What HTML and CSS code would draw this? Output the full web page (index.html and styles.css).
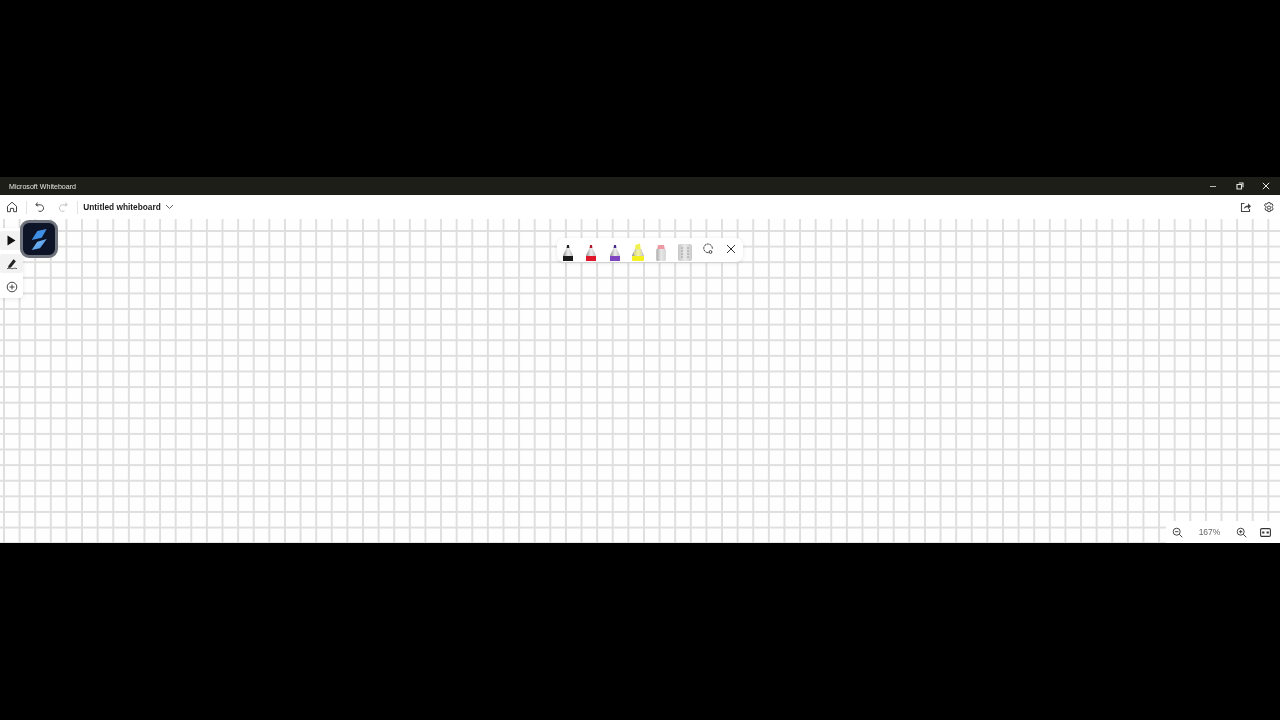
FILE: index.html
```html
<!DOCTYPE html>
<html lang="en">
<head>
<meta charset="utf-8">
<title>Microsoft Whiteboard</title>
<link rel="stylesheet" href="styles.css">
</head>
<body>
<svg class="defs" width="0" height="0" aria-hidden="true">
  <defs>
    <linearGradient id="cone" x1="0" x2="1" y1="0" y2="0">
      <stop offset="0" stop-color="#8c8c8c"/><stop offset=".5" stop-color="#eeeeee"/><stop offset="1" stop-color="#bdbdbd"/>
    </linearGradient>
    <linearGradient id="eras" x1="0" x2="1" y1="0" y2="0">
      <stop offset="0" stop-color="#a9a9a9"/><stop offset=".5" stop-color="#e8e8e8"/><stop offset="1" stop-color="#d2d2d2"/>
    </linearGradient>
    <linearGradient id="rule" x1="0" x2="1" y1="0" y2="0">
      <stop offset="0" stop-color="#c6c6c6"/><stop offset=".5" stop-color="#e9e9e9"/><stop offset="1" stop-color="#c9c9c9"/>
    </linearGradient>
    <linearGradient id="blue" x1="0" x2="1" y1="0" y2="1">
      <stop offset="0" stop-color="#8cc4f5"/><stop offset="1" stop-color="#3f8fe6"/>
    </linearGradient>
  </defs>
</svg>
<main class="app">
  <header class="titlebar">
    <span class="app-name">Microsoft Whiteboard</span>
    <div class="win-controls">
      <span class="win-btn"><svg width="8" height="8" viewBox="0 0 8 8"><path d="M1 4.500h6" stroke="#bdbdb8" fill="none"/></svg></span>
      <span class="win-btn"><svg width="8" height="8" viewBox="0 0 8 8"><path d="M1 2.500h4.500v4.500h-4.500zM2.800 1h4.200v4.200" stroke="#e6e6e2" fill="none" stroke-width="1.100"/></svg></span>
      <span class="win-btn"><svg width="8" height="8" viewBox="0 0 8 8"><path d="M.8.8l6.400 6.400M7.200.8l-6.400 6.400" stroke="#ecece8" fill="none"/></svg></span>
    </div>
  </header>
  <nav class="cmdbar">
    <span class="cmd cmd-home"><svg width="12" height="12" viewBox="0 0 12 12"><path d="M1.500 5.300L6 1.200l4.500 4.100v5.400H7.600V7.400H4.400v3.300H1.500z" fill="none" stroke="#444" stroke-width="1"/></svg></span>
    <span class="sep"></span>
    <span class="cmd cmd-undo"><svg width="12" height="12" viewBox="0 0 12 12"><path d="M3.500 1.500L1.800 3.800l2.400 1.400M2 3.800h4.300a3.300 3.300 0 1 1-1.800 6.100" fill="none" stroke="#444" stroke-width="1"/></svg></span>
    <span class="cmd cmd-redo"><svg width="12" height="12" viewBox="0 0 12 12"><path d="M8.500 1.500l1.700 2.300-2.400 1.400M10 3.800H5.700a3.300 3.300 0 1 0 1.800 6.100" fill="none" stroke="#c4c4c4" stroke-width="1"/></svg></span>
    <span class="sep sep-title"></span>
    <span class="doc-title">Untitled whiteboard</span>
    <svg class="chev" width="9" height="6" viewBox="0 0 9 6"><path d="M1 1l3.500 3.500L8 1" fill="none" stroke="#666" stroke-width="1"/></svg>
    <span class="spacer"></span>
    <span class="cmd cmd-share"><svg width="12" height="12" viewBox="0 0 12 12"><path d="M4.500 2.500H1.500v8h8V8" fill="none" stroke="#444" stroke-width="1.100"/><path d="M3.800 8C4 5.600 5.600 4.400 8 4.400V2.200l3 3-3 3V6.200c-1.800 0-3.200.5-4.200 1.800z" fill="#444"/></svg></span>
    <span class="cmd cmd-gear"><svg width="12" height="12" viewBox="0 -.6 12 12"><path d="M4.900 1h2.200l.4 1.600 1.500-.6 1.100 1.900-1.200 1.100.1.900 1.200 1.100-1.100 1.900-1.500-.6-.4 1.700H4.900l-.4-1.700-1.500.6-1.100-1.900 1.200-1.100v-.9L1.400 3.900 2.500 2l1.500.6z" fill="none" stroke="#444" stroke-width="1"/><circle cx="6" cy="6" r="1.600" fill="none" stroke="#444"/></svg></span>
  </nav>
  <section class="canvas">
    <aside class="rail">
      <span class="tile tile-on"><svg width="9" height="11" viewBox="0 0 9 11"><path d="M.5.500l8 5-8 5z" fill="#111"/></svg></span>
      <span class="tile tile-on"><svg width="12" height="12" viewBox="0 0 12 12"><path d="M2.500 7.700L7.500 1.300l2.400 1.900-5 6.200-2.800.5z" fill="#222"/><path d="M1 10.700c3-1.200 4 .6 6.500-.2 1.200-.4 2-.4 3.500.2" fill="none" stroke="#333" stroke-width=".8"/></svg></span>
      <span class="tile"><svg width="12" height="12" viewBox="0 0 12 12"><circle cx="6" cy="6" r="4.800" fill="none" stroke="#444" stroke-width="1"/><path d="M6 3.500v5M3.500 6h5" stroke="#444" stroke-width="1" fill="none"/></svg></span>
    </aside>
    <div class="logo">
      <svg width="32" height="32" viewBox="0 0 32 32"><path d="M14.300 8L23.700 6 18.700 14.700 8.700 17z" fill="#3f8fe6"/><path d="M23.700 16L17 25.300 8.700 27 14.300 18.700z" fill="url(#blue)"/></svg>
    </div>
    <div class="inkbar">
      <span class="ink"><svg width="16" height="20" viewBox="0 -3 16 20"><path d="M6.600 4h2.800C10.500 7 12.500 9 13 12H3C3.500 9 5.500 7 6.600 4z" fill="url(#cone)"/><path d="M7 1h2l.4 3H6.600z" fill="#222"/><rect x="3" y="12" width="10" height="5" fill="#1b1b1b"/></svg></span>
      <span class="ink"><svg width="16" height="20" viewBox="0 -3 16 20"><path d="M6.600 4h2.800C10.500 7 12.500 9 13 12H3C3.500 9 5.500 7 6.600 4z" fill="url(#cone)"/><path d="M7 1h2l.4 3H6.600z" fill="#b0182c"/><rect x="3" y="12" width="10" height="5" fill="#e0162b"/></svg></span>
      <span class="ink"><svg width="16" height="20" viewBox="0 -3 16 20"><path d="M6.600 4h2.800C10.500 7 12.500 9 13 12H3C3.500 9 5.500 7 6.600 4z" fill="url(#cone)"/><path d="M7 1h2l.4 3H6.600z" fill="#4a2a8c"/><rect x="3" y="12" width="10" height="5" fill="#7f45c0"/></svg></span>
      <span class="ink"><svg width="16" height="20" viewBox="0 -3 16 20"><path d="M5 5h6.500c.5 3 2 4.500 2.500 7H2c.5-3 2.500-4 3-7z" fill="url(#cone)"/><path d="M5.500 1l4.500-1.500.8 6H5z" fill="#f2f04a"/><path d="M4 7.500l6.500-1.500 1.500 5-8 .5z" fill="#f5f36a" opacity=".6"/><rect x="2" y="12" width="12" height="5" rx="1" fill="#f5f020"/></svg></span>
      <span class="ink"><svg width="16" height="20" viewBox="0 -3 16 20"><path d="M4 6l1-5h6l1 5z" fill="#ee9aa2"/><rect x="3.300" y="5" width="9.500" height="12" rx="1" fill="url(#eras)"/></svg></span>
      <span class="ink"><svg width="16" height="20" viewBox="0 -3 16 20"><rect x="1" y="0" width="14" height="17" rx="2" fill="url(#rule)"/><path d="M4 4h2M4 7h2M4 10h2M4 13h2M10 4h2M10 7h2M10 10h2M10 13h2" stroke="#8f8f8f" stroke-width=".8" fill="none"/></svg></span>
      <span class="ink ink-mid"><svg width="12" height="12" viewBox="0 0 12 12"><path d="M6.500 9.600A4.300 4.300 0 1 1 10.300 6" fill="none" stroke="#333" stroke-width="1" stroke-dasharray="2.400 .6"/><circle cx="8.500" cy="9" r="1.400" fill="none" stroke="#333" stroke-width=".9"/></svg></span>
      <span class="ink ink-mid"><svg width="10" height="10" viewBox="0 0 10 10"><path d="M1 1l8 8M9 1L1 9" stroke="#333" stroke-width="1" fill="none"/></svg></span>
    </div>
    <div class="zoombar">
      <span class="zb zb-out"><svg width="11" height="11" viewBox="0 0 11 11"><circle cx="4.700" cy="4.700" r="3.500" fill="none" stroke="#444"/><path d="M7.300 7.300l3 3M3 4.700h3.400" stroke="#444" fill="none"/></svg></span>
      <span class="zoom-val">167%</span>
      <span class="zb zb-in"><svg width="11" height="11" viewBox="0 0 11 11"><circle cx="4.700" cy="4.700" r="3.500" fill="none" stroke="#444"/><path d="M7.300 7.300l3 3M3 4.700h3.400M4.700 3v3.400" stroke="#444" fill="none"/></svg></span>
      <span class="zb zb-fit"><svg width="11" height="9" viewBox="0 0 11 9"><rect x=".6" y=".6" width="9.800" height="7.800" rx="1.200" fill="none" stroke="#333" stroke-width="1.100"/><path d="M2.200 4.500h2.200M6.600 4.500h2.200" stroke="#333" stroke-width="1.800" fill="none"/></svg></span>
    </div>
  </section>
</main>
</body>
</html>
```
FILE: styles.css
```css
* { box-sizing: border-box; }
html, body { margin: 0; height: 100%; background: #000; overflow: hidden; }
body { padding-top: 177px; font-family: "Liberation Sans", Arial, sans-serif; }
.defs { position: absolute; }
.app { height: 366px; display: flex; flex-direction: column; filter: blur(.35px); }

.titlebar { height: 18px; flex: none; background: #1e1e18; display: flex; align-items: center; justify-content: space-between; padding-left: 9px; }
.app-name { font-size: 7.1px; color: #e6e6e2; line-height: 20px; height: 18px; white-space: nowrap; }
.win-controls { display: flex; padding-right: .5px; }
.win-btn { width: 26.6px; height: 18px; display: flex; align-items: center; justify-content: center; }

.cmdbar { height: 24px; flex: none; background: #fff; display: flex; align-items: center; padding-left: 6px; }
.cmd { width: 12px; height: 12px; display: flex; flex: none; }
.sep { width: 1px; height: 13px; background: #e2e2e2; margin-left: 7.5px; }
.cmd-undo { margin-left: 7.5px; }
.cmd-redo { margin-left: 11px; }
.sep-title { margin-left: 8px; }
.doc-title { margin-left: 5.300px; font-size: 8.3px; font-weight: 700; color: #1c1c1c; white-space: nowrap; }
.chev { margin-left: 4px; }
.spacer { flex: 1; }
.cmd-share { margin-right: 11px; }
.cmd-gear { margin-right: 5px; }

.canvas { flex: 1; position: relative; overflow: hidden; background-color: #fefefe;
  background-image: linear-gradient(90deg, #dfdfdf 2px, transparent 2px), linear-gradient(#dfdfdf 2px, transparent 2px);
  background-size: 15.62px 15.62px; background-position: 3px 11px; }

.rail { position: absolute; left: 0; top: 9px; width: 23px; height: 70px; background: #fff; border-radius: 0 0 4px 0; box-shadow: 0 1px 4px rgba(0,0,0,.1); display: flex; flex-direction: column; gap: 4px; padding-top: 3px; }
.tile { height: 19px; display: flex; align-items: center; justify-content: center; border-radius: 2px; }
.tile-on { background: #f2f2f2; }

.logo { position: absolute; left: 20px; top: 1px; width: 38px; height: 38px; border-radius: 9px; background: #0e1427; border: 3px solid #6d717c; display: flex; align-items: center; justify-content: center; }

.inkbar { position: absolute; left: 556.5px; top: 19px; height: 24px; display: flex; background: #fff; border-radius: 7px; box-shadow: 0 1px 4px rgba(0,0,0,.1); }
.ink { width: 23.3px; height: 24px; display: flex; align-items: flex-end; justify-content: center; padding-bottom: 1px; }
.ink-mid { align-items: center; padding-bottom: 1.500px; }

.zoombar { position: absolute; right: 0; bottom: 0; width: 114px; height: 22px; background: #fff; border-radius: 4px 0 0 0; display: flex; align-items: center; padding-left: 6px; }
.zb { width: 11px; height: 11px; display: flex; align-items: center; justify-content: center; flex: none; }
.zoom-val { width: 53px; text-align: center; font-size: 8.5px; color: #666; }
.zb-fit { margin-left: 13px; }
```
